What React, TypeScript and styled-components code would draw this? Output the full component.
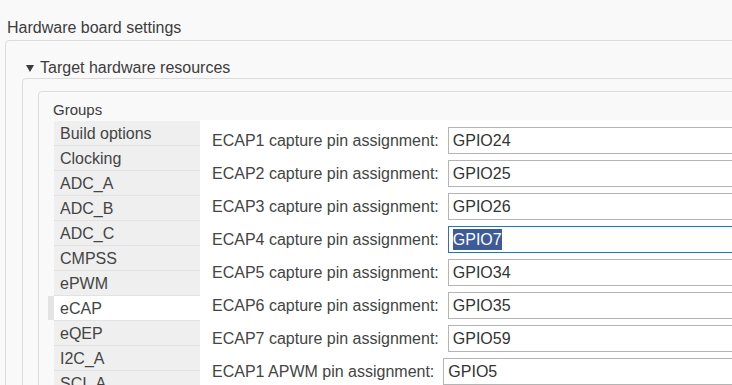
import React from "react";
import styled, { createGlobalStyle } from "styled-components";

const GlobalStyle = createGlobalStyle`
  html, body {
    margin: 0;
    padding: 0;
    background: #f9f9f9;
    overflow: hidden;
    font-family: "Liberation Sans", Arial, sans-serif;
    color: #404040;
  }
`;

const Page = styled.div`
  width: 1100px;
  height: 385px;
  overflow: hidden;
`;

const Title = styled.div`
  padding: 19px 7px 0;
  font-size: 16px;
  line-height: 18px;
  color: #3c3c3c;
`;

const Panel = styled.div<{ $left: number; $top: number }>`
  margin-left: ${(p) => p.$left}px;
  margin-top: ${(p) => p.$top}px;
  border: 1px solid #dcdcdc;
  border-radius: 4px;
  background: #f9f9f9;
`;

const SectionHeader = styled.div`
  display: flex;
  align-items: center;
  gap: 6px;
  padding: 18px 0 0 20px;
  margin-bottom: 1px;
  font-size: 16px;
  line-height: 18px;
  color: #3c3c3c;
`;

const Triangle = styled.span`
  width: 0;
  height: 0;
  border-left: 4px solid transparent;
  border-right: 4px solid transparent;
  border-top: 7px solid #3c3c3c;
`;

const Inner = styled.div`
  padding-top: 12px;
`;

const GroupsLabel = styled.div`
  padding: 9px 0 0 14px;
  font-size: 15px;
  line-height: 17px;
  color: #3c3c3c;
`;

const Body = styled.div`
  display: flex;
  margin-top: 2px;
  padding-left: 15px;
  height: 400px;
`;

const GroupList = styled.ul`
  list-style: none;
  margin: 1px 0 0;
  padding: 0;
  width: 146px;
  flex-shrink: 0;
`;

const GroupItem = styled.li<{ $active?: boolean }>`
  position: relative;
  height: 24px;
  line-height: 25px;
  padding-left: 6px;
  font-size: 16px;
  color: #444444;
  background: ${(p) => (p.$active ? "#ffffff" : "#efefef")};
  border-bottom: 1px solid #e2e2e2;

  ${(p) =>
    p.$active &&
    `
    &::before {
      content: "";
      position: absolute;
      left: -6px;
      top: 0;
      width: 6px;
      height: 24px;
      background: #e3e3e3;
    }
  `}
`;

const Content = styled.div`
  flex: 1;
  background: #ffffff;
  padding: 7px 0 0 12px;
  display: flex;
  flex-direction: column;
  gap: 6px;
`;

const FieldRow = styled.div`
  display: flex;
  align-items: center;
  gap: 9px;
  height: 27px;
`;

const Label = styled.span`
  font-size: 16px;
  color: #444444;
  white-space: nowrap;
`;

const Field = styled.div<{ $focused?: boolean }>`
  box-sizing: border-box;
  width: 400px;
  height: 27px;
  padding: 0 4px;
  display: flex;
  align-items: center;
  font-size: 16px;
  color: #333333;
  background: #ffffff;
  border: 1px solid ${(p) => (p.$focused ? "#3c6ea5" : "#b4b4b4")};
`;

const Selected = styled.span`
  background: #3d5a99;
  color: #ffffff;
  line-height: 21px;
`;

const groups = [
  "Build options",
  "Clocking",
  "ADC_A",
  "ADC_B",
  "ADC_C",
  "CMPSS",
  "ePWM",
  "eCAP",
  "eQEP",
  "I2C_A",
  "SCI_A",
];

const fields = [
  { label: "ECAP1 capture pin assignment:", value: "GPIO24" },
  { label: "ECAP2 capture pin assignment:", value: "GPIO25" },
  { label: "ECAP3 capture pin assignment:", value: "GPIO26" },
  { label: "ECAP4 capture pin assignment:", value: "GPIO7", focused: true },
  { label: "ECAP5 capture pin assignment:", value: "GPIO34" },
  { label: "ECAP6 capture pin assignment:", value: "GPIO35" },
  { label: "ECAP7 capture pin assignment:", value: "GPIO59" },
  { label: "ECAP1 APWM pin assignment:", value: "GPIO5" },
];

const App: React.FC = () => {
  return (
    <Page>
      <GlobalStyle />
      <Title>Hardware board settings</Title>
      <Panel $left={5} $top={3}>
        <SectionHeader>
          <Triangle />
          <span>Target hardware resources</span>
        </SectionHeader>
        <Panel $left={16} $top={0}>
          <Inner>
            <Panel $left={15} $top={0}>
              <GroupsLabel>Groups</GroupsLabel>
              <Body>
                <GroupList>
                  {groups.map((g) => (
                    <GroupItem key={g} $active={g === "eCAP"}>
                      {g}
                    </GroupItem>
                  ))}
                </GroupList>
                <Content>
                  {fields.map((f) => (
                    <FieldRow key={f.label}>
                      <Label>{f.label}</Label>
                      <Field $focused={f.focused}>
                        {f.focused ? <Selected>{f.value}</Selected> : f.value}
                      </Field>
                    </FieldRow>
                  ))}
                </Content>
              </Body>
            </Panel>
          </Inner>
        </Panel>
      </Panel>
    </Page>
  );
};

export default App;
